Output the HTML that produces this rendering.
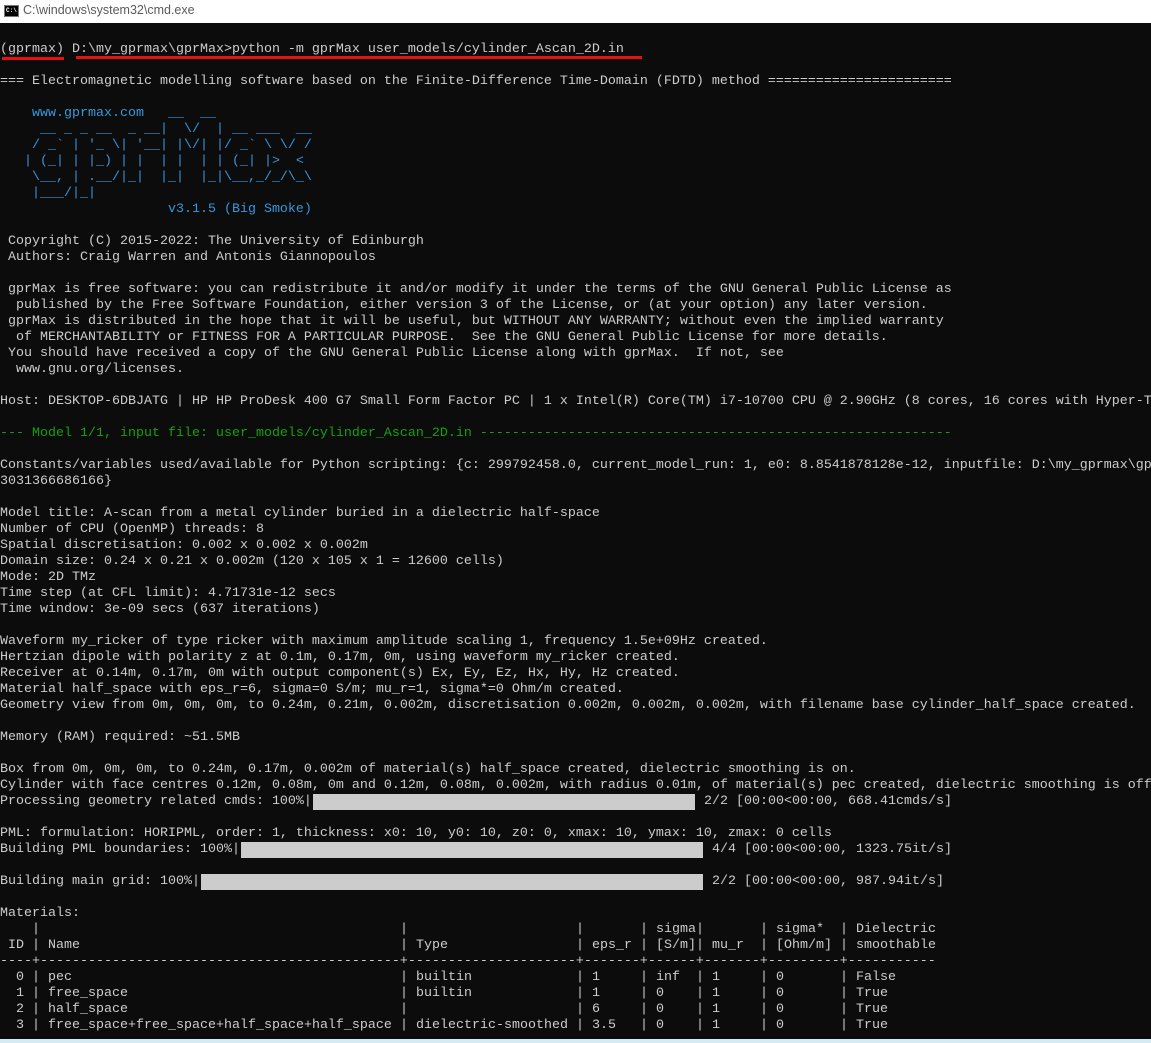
<!DOCTYPE html>
<html><head><meta charset="utf-8">
<style>
html,body{margin:0;padding:0;width:1151px;height:1043px;overflow:hidden;background:#0c0c0c;}
#title{position:absolute;left:0;top:0;width:1151px;height:23px;background:#fff;}
#title .ic{position:absolute;left:4px;top:5px;width:15px;height:12px;background:#000;border:1px solid #777;box-sizing:border-box;color:#fff;font:bold 6px "Liberation Mono",monospace;line-height:10px;text-indent:1px;}
#title .t{position:absolute;left:23px;top:3px;font:12.5px "Liberation Sans",sans-serif;color:#5a5a5a;}
#term{position:absolute;left:0;top:26px;width:1151px;height:1013px;overflow:hidden;}
.l{position:absolute;left:0;height:16px;white-space:pre;font-family:"Liberation Mono",monospace;font-size:13.333px;line-height:16px;color:#ccc;}
.b{color:#3a96dd}.g{color:#13a10e}
.bar{position:absolute;height:16px;background:#cccccc;}
.red{position:absolute;height:3px;background:#e81010;}
#strip{position:absolute;left:0;top:1039px;width:1151px;height:4px;background:#d5ebf3;}
</style></head><body>
<div id="title"><div class="ic">C:\</div><div class="t">C:\windows\system32\cmd.exe</div></div>
<div id="term">
<div class="l" style="top:16px">(gprmax) D:\my_gprmax\gprMax&gt;python -m gprMax user_models/cylinder_Ascan_2D.in</div>
<div class="l" style="top:48px">=== Electromagnetic modelling software based on the Finite-Difference Time-Domain (FDTD) method =======================</div>
<div class="l b" style="top:80px">    www.gprmax.com   __  __</div>
<div class="l b" style="top:96px">     __ _ _ __  _ __|  \/  | __ ___  __</div>
<div class="l b" style="top:112px">    / _` | '_ \| '__| |\/| |/ _` \ \/ /</div>
<div class="l b" style="top:128px">   | (_| | |_) | |  | |  | | (_| |&gt;  &lt;</div>
<div class="l b" style="top:144px">    \__, | .__/|_|  |_|  |_|\__,_/_/\_\</div>
<div class="l b" style="top:160px">    |___/|_|</div>
<div class="l b" style="top:176px">                     v3.1.5 (Big Smoke)</div>
<div class="l" style="top:208px"> Copyright (C) 2015-2022: The University of Edinburgh</div>
<div class="l" style="top:224px"> Authors: Craig Warren and Antonis Giannopoulos</div>
<div class="l" style="top:256px"> gprMax is free software: you can redistribute it and/or modify it under the terms of the GNU General Public License as</div>
<div class="l" style="top:272px">  published by the Free Software Foundation, either version 3 of the License, or (at your option) any later version.</div>
<div class="l" style="top:288px"> gprMax is distributed in the hope that it will be useful, but WITHOUT ANY WARRANTY; without even the implied warranty</div>
<div class="l" style="top:304px">  of MERCHANTABILITY or FITNESS FOR A PARTICULAR PURPOSE.  See the GNU General Public License for more details.</div>
<div class="l" style="top:320px"> You should have received a copy of the GNU General Public License along with gprMax.  If not, see</div>
<div class="l" style="top:336px">  www.gnu.org/licenses.</div>
<div class="l" style="top:368px">Host: DESKTOP-6DBJATG | HP HP ProDesk 400 G7 Small Form Factor PC | 1 x Intel(R) Core(TM) i7-10700 CPU @ 2.90GHz (8 cores, 16 cores with Hyper-Threading)</div>
<div class="l g" style="top:400px">--- Model 1/1, input file: user_models/cylinder_Ascan_2D.in -----------------------------------------------------------</div>
<div class="l" style="top:432px">Constants/variables used/available for Python scripting: {c: 299792458.0, current_model_run: 1, e0: 8.8541878128e-12, inputfile: D:\my_gprmax\gprMax\user_models\cylinder_Ascan_2D.in</div>
<div class="l" style="top:448px">3031366686166}</div>
<div class="l" style="top:480px">Model title: A-scan from a metal cylinder buried in a dielectric half-space</div>
<div class="l" style="top:496px">Number of CPU (OpenMP) threads: 8</div>
<div class="l" style="top:512px">Spatial discretisation: 0.002 x 0.002 x 0.002m</div>
<div class="l" style="top:528px">Domain size: 0.24 x 0.21 x 0.002m (120 x 105 x 1 = 12600 cells)</div>
<div class="l" style="top:544px">Mode: 2D TMz</div>
<div class="l" style="top:560px">Time step (at CFL limit): 4.71731e-12 secs</div>
<div class="l" style="top:576px">Time window: 3e-09 secs (637 iterations)</div>
<div class="l" style="top:608px">Waveform my_ricker of type ricker with maximum amplitude scaling 1, frequency 1.5e+09Hz created.</div>
<div class="l" style="top:624px">Hertzian dipole with polarity z at 0.1m, 0.17m, 0m, using waveform my_ricker created.</div>
<div class="l" style="top:640px">Receiver at 0.14m, 0.17m, 0m with output component(s) Ex, Ey, Ez, Hx, Hy, Hz created.</div>
<div class="l" style="top:656px">Material half_space with eps_r=6, sigma=0 S/m; mu_r=1, sigma*=0 Ohm/m created.</div>
<div class="l" style="top:672px">Geometry view from 0m, 0m, 0m, to 0.24m, 0.21m, 0.002m, discretisation 0.002m, 0.002m, 0.002m, with filename base cylinder_half_space created.</div>
<div class="l" style="top:704px">Memory (RAM) required: ~51.5MB</div>
<div class="l" style="top:736px">Box from 0m, 0m, 0m, to 0.24m, 0.17m, 0.002m of material(s) half_space created, dielectric smoothing is on.</div>
<div class="l" style="top:752px">Cylinder with face centres 0.12m, 0.08m, 0m and 0.12m, 0.08m, 0.002m, with radius 0.01m, of material(s) pec created, dielectric smoothing is off.</div>
<div class="l" style="top:768px">Processing geometry related cmds: 100%|</div>
<div class="bar" style="left:313px;top:768px;width:382px"></div>
<div class="l" style="top:768px;left:704px">2/2 [00:00&lt;00:00, 668.41cmds/s]</div>
<div class="l" style="top:800px">PML: formulation: HORIPML, order: 1, thickness: x0: 10, y0: 10, z0: 0, xmax: 10, ymax: 10, zmax: 0 cells</div>
<div class="l" style="top:816px">Building PML boundaries: 100%|</div>
<div class="bar" style="left:241px;top:816px;width:462px"></div>
<div class="l" style="top:816px;left:712px">4/4 [00:00&lt;00:00, 1323.75it/s]</div>
<div class="l" style="top:848px">Building main grid: 100%|</div>
<div class="bar" style="left:201px;top:848px;width:502px"></div>
<div class="l" style="top:848px;left:712px">2/2 [00:00&lt;00:00, 987.94it/s]</div>
<div class="l" style="top:880px">Materials:</div>

<div class="l" style="top:896px;left:32px">|</div><div class="l" style="top:896px;left:400px">|</div><div class="l" style="top:896px;left:576px">|</div><div class="l" style="top:896px;left:640px">|</div><div class="l" style="top:896px;left:656px">sigma</div><div class="l" style="top:896px;left:696px">|</div><div class="l" style="top:896px;left:760px">|</div><div class="l" style="top:896px;left:776px">sigma*</div><div class="l" style="top:896px;left:840px">|</div><div class="l" style="top:896px;left:856px">Dielectric</div>

<div class="l" style="top:912px;left:8px">ID</div><div class="l" style="top:912px;left:32px">|</div><div class="l" style="top:912px;left:48px">Name</div><div class="l" style="top:912px;left:400px">|</div><div class="l" style="top:912px;left:416px">Type</div><div class="l" style="top:912px;left:576px">|</div><div class="l" style="top:912px;left:592px">eps_r</div><div class="l" style="top:912px;left:640px">|</div><div class="l" style="top:912px;left:656px">[S/m]</div><div class="l" style="top:912px;left:696px">|</div><div class="l" style="top:912px;left:712px">mu_r</div><div class="l" style="top:912px;left:760px">|</div><div class="l" style="top:912px;left:776px">[Ohm/m]</div><div class="l" style="top:912px;left:840px">|</div><div class="l" style="top:912px;left:856px">smoothable</div>

<div class="l" style="top:928px">----+---------------------------------------------+---------------------+-------+------+-------+---------+-----------</div>

<div class="l" style="top:944px;left:16px">0</div><div class="l" style="top:944px;left:32px">|</div><div class="l" style="top:944px;left:48px">pec</div><div class="l" style="top:944px;left:400px">|</div><div class="l" style="top:944px;left:416px">builtin</div><div class="l" style="top:944px;left:576px">|</div><div class="l" style="top:944px;left:592px">1</div><div class="l" style="top:944px;left:640px">|</div><div class="l" style="top:944px;left:656px">inf</div><div class="l" style="top:944px;left:696px">|</div><div class="l" style="top:944px;left:712px">1</div><div class="l" style="top:944px;left:760px">|</div><div class="l" style="top:944px;left:776px">0</div><div class="l" style="top:944px;left:840px">|</div><div class="l" style="top:944px;left:856px">False</div>

<div class="l" style="top:960px;left:16px">1</div><div class="l" style="top:960px;left:32px">|</div><div class="l" style="top:960px;left:48px">free_space</div><div class="l" style="top:960px;left:400px">|</div><div class="l" style="top:960px;left:416px">builtin</div><div class="l" style="top:960px;left:576px">|</div><div class="l" style="top:960px;left:592px">1</div><div class="l" style="top:960px;left:640px">|</div><div class="l" style="top:960px;left:656px">0</div><div class="l" style="top:960px;left:696px">|</div><div class="l" style="top:960px;left:712px">1</div><div class="l" style="top:960px;left:760px">|</div><div class="l" style="top:960px;left:776px">0</div><div class="l" style="top:960px;left:840px">|</div><div class="l" style="top:960px;left:856px">True</div>

<div class="l" style="top:976px;left:16px">2</div><div class="l" style="top:976px;left:32px">|</div><div class="l" style="top:976px;left:48px">half_space</div><div class="l" style="top:976px;left:400px">|</div><div class="l" style="top:976px;left:576px">|</div><div class="l" style="top:976px;left:592px">6</div><div class="l" style="top:976px;left:640px">|</div><div class="l" style="top:976px;left:656px">0</div><div class="l" style="top:976px;left:696px">|</div><div class="l" style="top:976px;left:712px">1</div><div class="l" style="top:976px;left:760px">|</div><div class="l" style="top:976px;left:776px">0</div><div class="l" style="top:976px;left:840px">|</div><div class="l" style="top:976px;left:856px">True</div>

<div class="l" style="top:992px;left:16px">3</div><div class="l" style="top:992px;left:32px">|</div><div class="l" style="top:992px;left:48px">free_space+free_space+half_space+half_space</div><div class="l" style="top:992px;left:400px">|</div><div class="l" style="top:992px;left:416px">dielectric-smoothed</div><div class="l" style="top:992px;left:576px">|</div><div class="l" style="top:992px;left:592px">3.5</div><div class="l" style="top:992px;left:640px">|</div><div class="l" style="top:992px;left:656px">0</div><div class="l" style="top:992px;left:696px">|</div><div class="l" style="top:992px;left:712px">1</div><div class="l" style="top:992px;left:760px">|</div><div class="l" style="top:992px;left:776px">0</div><div class="l" style="top:992px;left:840px">|</div><div class="l" style="top:992px;left:856px">True</div>
</div>
<div class="red" style="left:2px;top:57px;width:62px;"></div>
<div class="red" style="left:76px;top:56px;width:566px;"></div>
<div id="strip"></div>
</body></html>
